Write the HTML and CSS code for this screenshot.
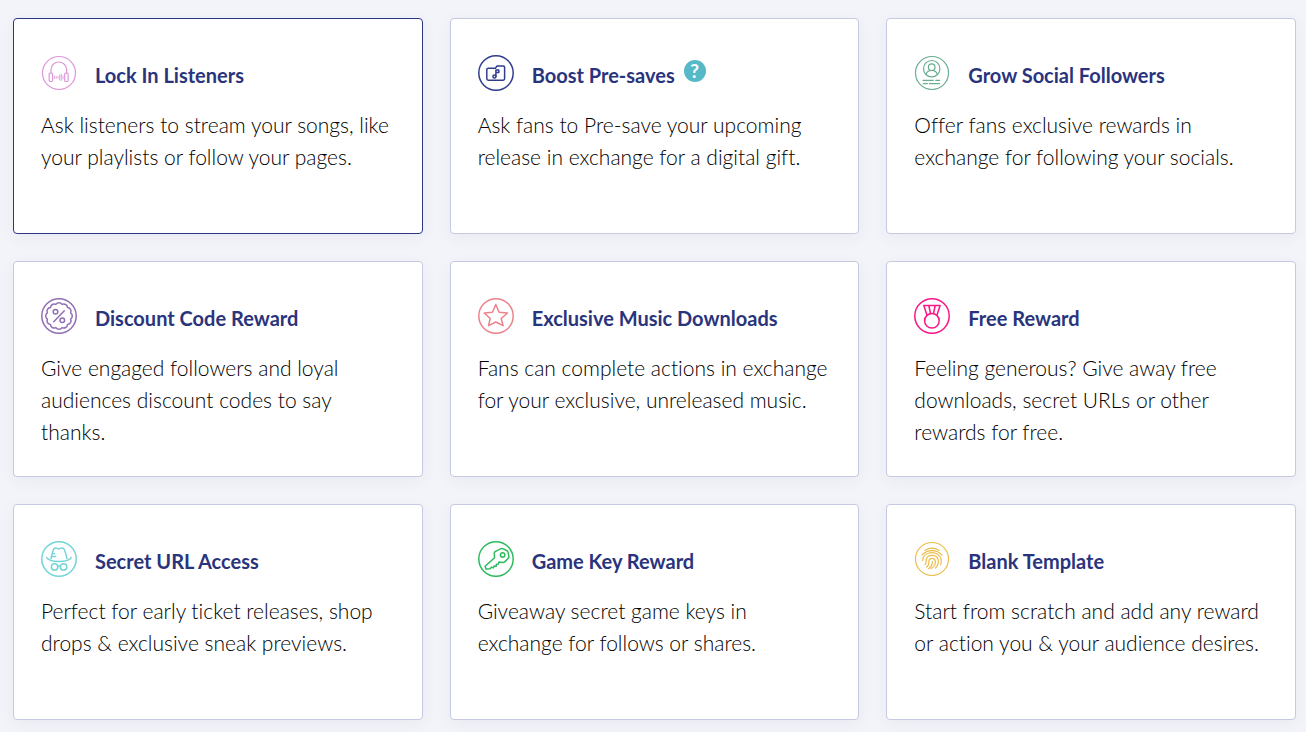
FILE: index.html
```html
<!DOCTYPE html>
<html lang="en">
<head>
    <meta charset="UTF-8">
    <meta name="viewport" content="width=device-width, initial-scale=1.0">
    <title>Campaign Templates</title>
    <link rel="stylesheet" href="styles.css">
</head>
<body>
    <main class="templates">
        <article class="card active">
            <div class="card-head">
                <svg class="icon pink" viewBox="0 0 36 36" aria-hidden="true">
                    <circle cx="18" cy="18" r="16.5"/>
                    <path d="M10 18v-3.500a7.800 7.500 0 0 1 15.600 0V18"/>
                    <rect x="8.200" y="18" width="3.400" height="8.500" rx="1"/>
                    <rect x="23.700" y="18" width="3.400" height="8.500" rx="1"/>
                    <path d="M13.700 21v2.600M15.300 21.700v1.300M17 21.500v1.700M18.700 20v5M20.300 19v6.500M22 21v3" stroke-width=".9"/>
                </svg>
                <h2><a href="#">Lock In Listeners</a></h2>
            </div>
            <p>Ask listeners to stream your songs, like your playlists or follow your pages.</p>
        </article>
        <article class="card">
            <div class="card-head">
                <svg class="icon navy" viewBox="0 0 36 36" aria-hidden="true">
                    <circle cx="18" cy="18" r="17.2"/>
                    <path d="M10.200 13.200h7.300l1.500-2.200h6.200a1.400 1.400 0 0 1 1.400 1.400v11.400a1.400 1.400 0 0 1-1.400 1.400h-15a1.400 1.400 0 0 1-1.400-1.400v-9.200a1.400 1.400 0 0 1 1.400-1.400z"/>
                    <circle cx="16.400" cy="21.600" r="1.500"/>
                    <path d="M17.900 21.600v-6.600h2.900v2.600h-2.900"/>
                </svg>
                <h2><a href="#">Boost Pre-saves</a></h2>
                <button class="help" type="button" aria-label="Help">?</button>
            </div>
            <p>Ask fans to Pre-save your upcoming release in exchange for a digital gift.</p>
        </article>
        <article class="card">
            <div class="card-head">
                <svg class="icon green" viewBox="0 0 36 36" aria-hidden="true">
                    <circle cx="18" cy="18" r="16.5"/>
                    <circle cx="17.700" cy="13.700" r="8.200"/>
                    <circle cx="17.700" cy="12.200" r="3.300"/>
                    <path d="M12 19.500c.6-2.600 2.800-4 5.700-4s5.100 1.400 5.700 4"/>
                    <path d="M9 25.300h10.300M21.700 25.300h4M9.300 28.700h4M15.300 28.700h10.400"/>
                </svg>
                <h2><a href="#">Grow Social Followers</a></h2>
            </div>
            <p>Offer fans exclusive rewards in exchange for following your socials.</p>
        </article>
        <article class="card">
            <div class="card-head">
                <svg class="icon purple" viewBox="0 0 36 36" aria-hidden="true">
                    <circle cx="18" cy="18" r="17.2"/>
                    <path d="M29.600 21.100a3.700 3.700 0 0 1-3.100 5.400a3.700 3.700 0 0 1-5.400 3.100a3.700 3.700 0 0 1-6.200 0a3.700 3.700 0 0 1-5.400-3.100a3.700 3.700 0 0 1-3.100-5.400a3.700 3.700 0 0 1 0-6.200a3.700 3.700 0 0 1 3.100-5.400a3.700 3.700 0 0 1 5.400-3.100a3.700 3.700 0 0 1 6.200 0a3.700 3.700 0 0 1 5.400 3.100a3.700 3.700 0 0 1 3.100 5.400a3.700 3.700 0 0 1 0 6.200z"/>
                    <circle cx="14.500" cy="13.700" r="2.300"/>
                    <circle cx="21.300" cy="22.300" r="2.300"/>
                    <path d="M23.300 12.700l-10.600 11"/>
                </svg>
                <h2><a href="#">Discount Code Reward</a></h2>
            </div>
            <p>Give engaged followers and loyal audiences discount codes to say thanks.</p>
        </article>
        <article class="card">
            <div class="card-head">
                <svg class="icon coral" viewBox="0 0 36 36" aria-hidden="true">
                    <circle cx="18" cy="18" r="17.2"/>
                    <path d="M17.800 6.500l3.300 7.700 8.400.8-6.300 5.500 1.900 7.200-7.300-3.700-7.300 3.700 1.700-7.200L6.200 15l8.200-.8z"/>
                </svg>
                <h2><a href="#">Exclusive Music Downloads</a></h2>
            </div>
            <p>Fans can complete actions in exchange for your exclusive, unreleased music.</p>
        </article>
        <article class="card">
            <div class="card-head">
                <svg class="icon magenta" viewBox="0 0 36 36" aria-hidden="true">
                    <circle cx="18" cy="18" r="17.2"/>
                    <circle cx="17.900" cy="22.800" r="7.300"/>
                    <path d="M13 17.300L9.800 7.500h16.300l-3.200 9.800M14.800 7.500l1.700 8M21.200 7.500l-1.700 8"/>
                </svg>
                <h2><a href="#">Free Reward</a></h2>
            </div>
            <p>Feeling generous? Give away free downloads, secret URLs or other rewards for free.</p>
        </article>
        <article class="card">
            <div class="card-head">
                <svg class="icon aqua" viewBox="0 0 36 36" aria-hidden="true">
                    <circle cx="18" cy="18" r="17.2"/>
                    <path d="M5.800 16.500c1.200 2.500 5.500 4 12.200 4s11-1.500 12.200-4"/>
                    <path d="M10 17.800c.6-2.800 1.300-6.500 2.400-9 .5-1.300 1.600-2.300 2.900-1.600 1.600.9 3.300.9 4.900 0 1.300-.7 2.600.2 3.200 1.600 1.200 2.700 2 6.200 2.600 9M11.200 12.500h2.300M10.500 15.500h4.200"/>
                    <circle cx="13.600" cy="25.900" r="3.200"/>
                    <circle cx="22.600" cy="25.900" r="3.200"/>
                    <path d="M16.800 25.500c.8-.6 1.800-.6 2.600 0"/>
                </svg>
                <h2><a href="#">Secret URL Access</a></h2>
            </div>
            <p>Perfect for early ticket releases, shop drops &amp; exclusive sneak previews.</p>
        </article>
        <article class="card">
            <div class="card-head">
                <svg class="icon emerald" viewBox="0 0 36 36" aria-hidden="true">
                    <circle cx="18" cy="18" r="17.2"/>
                    <path d="M16.200 12.300c.1-1 .6-1.600 1.500-2l4.800-2.400c1-.4 1.800-.4 2.700 0l3.500 1.600c.7.300 1.100.9 1.300 1.600l.9 4.200c.1.800 0 1.400-.6 2l-3.400 3.300c-.7.700-1.500.9-2.500.8l-3.500-.4-.6 2.100-1.900.2-.2 2-2-.3-.9 1.900-1.700-.8-1.400 1.600-4.200.3-.9-2.700 9.500-8.500z"/>
                    <circle cx="24.600" cy="14" r="2.200"/>
                </svg>
                <h2><a href="#">Game Key Reward</a></h2>
            </div>
            <p>Giveaway secret game keys in exchange for follows or shares.</p>
        </article>
        <article class="card">
            <div class="card-head">
                <svg class="icon gold" viewBox="0 0 36 36" aria-hidden="true">
                    <circle cx="18" cy="18" r="16.5"/>
                    <path d="M11 9.300c4.300-2.800 9.700-2.800 14 0M8 14.200c5-6.200 15-6.200 20 0M8.500 19.500c1-10 16.500-10.500 18.600-1 .4 1.800.2 3.500-.4 5.200M11 23.500c1.800-1 .7-3.500 1.400-5.500 1.800-5.300 10.300-4.800 11.700.7.800 3-.5 6.200-2.600 8.300M12.500 26c3-1.500 2-4.200 2.500-6.300.8-3.200 5.600-2.900 6.300.3.600 2.800-1.500 6-4.300 7.800M14.500 27.700c3-1.700 4-4.200 3.800-7.400"/>
                </svg>
                <h2><a href="#">Blank Template</a></h2>
            </div>
            <p>Start from scratch and add any reward or action you &amp; your audience desires.</p>
        </article>
    </main>
</body>
</html>
```
FILE: styles.css
```css
* {
    box-sizing: border-box;
}
body {
    margin: 0;
    background-color: #f3f4f9;
    color: #000;
    font-family: Lato, "Liberation Sans", sans-serif;
    font-variant-ligatures: none;
}
.templates {
    display: grid;
    grid-template-columns: repeat(3, 1fr);
    grid-auto-rows: 1fr;
    gap: 27px;
    padding: 18px 10px 12px 13px;
}
.card {
    padding: 36px 27px 28px;
    background-color: white;
    border: 1px solid #c5c9e2;
    border-radius: 4px;
    box-shadow: 0 4px 16px rgba(40, 50, 120, 0.05);
}
.card.active {
    border-color: #2b3880;
}
.card-head {
    display: flex;
    align-items: flex-end;
    height: 36px;
    margin-bottom: 18px;
}
.card h2 {
    margin: 0;
    font-size: 20px;
    font-weight: 700;
    line-height: 32px;
}
.card h2 a {
    color: #2a347c;
    text-decoration: none;
}
.card p {
    margin: 0;
    font-size: 21px;
    font-weight: 300;
    line-height: 32px;
}
.icon {
    flex: none;
    width: 36px;
    height: 36px;
    margin-right: 18px;
    fill: none;
    stroke: currentColor;
    stroke-width: 1.5;
    stroke-linecap: round;
    stroke-linejoin: round;
}
.help {
    align-self: center;
    width: 22px;
    height: 22px;
    margin: 0 0 4px 9px;
    padding: 0;
    border: 0;
    border-radius: 50%;
    background-color: #55b9c8;
    color: white;
    font: 700 19px/22px Lato, sans-serif;
}
.pink {
    color: #dd96d8;
    stroke-width: 1.2;
}
.navy {
    color: #303d8c;
}
.green {
    color: #68ae90;
    stroke-width: 1.2;
}
.purple {
    color: #906fb4;
}
.coral {
    color: #ec828b;
}
.magenta {
    color: #fa1685;
}
.aqua {
    color: #72d5d7;
}
.emerald {
    color: #2bbc5d;
}
.gold {
    color: #ecbd4b;
    stroke-width: 1.2;
}
@media (max-width: 900px) {
    .templates {
        grid-template-columns: 1fr;
    }
}
```
